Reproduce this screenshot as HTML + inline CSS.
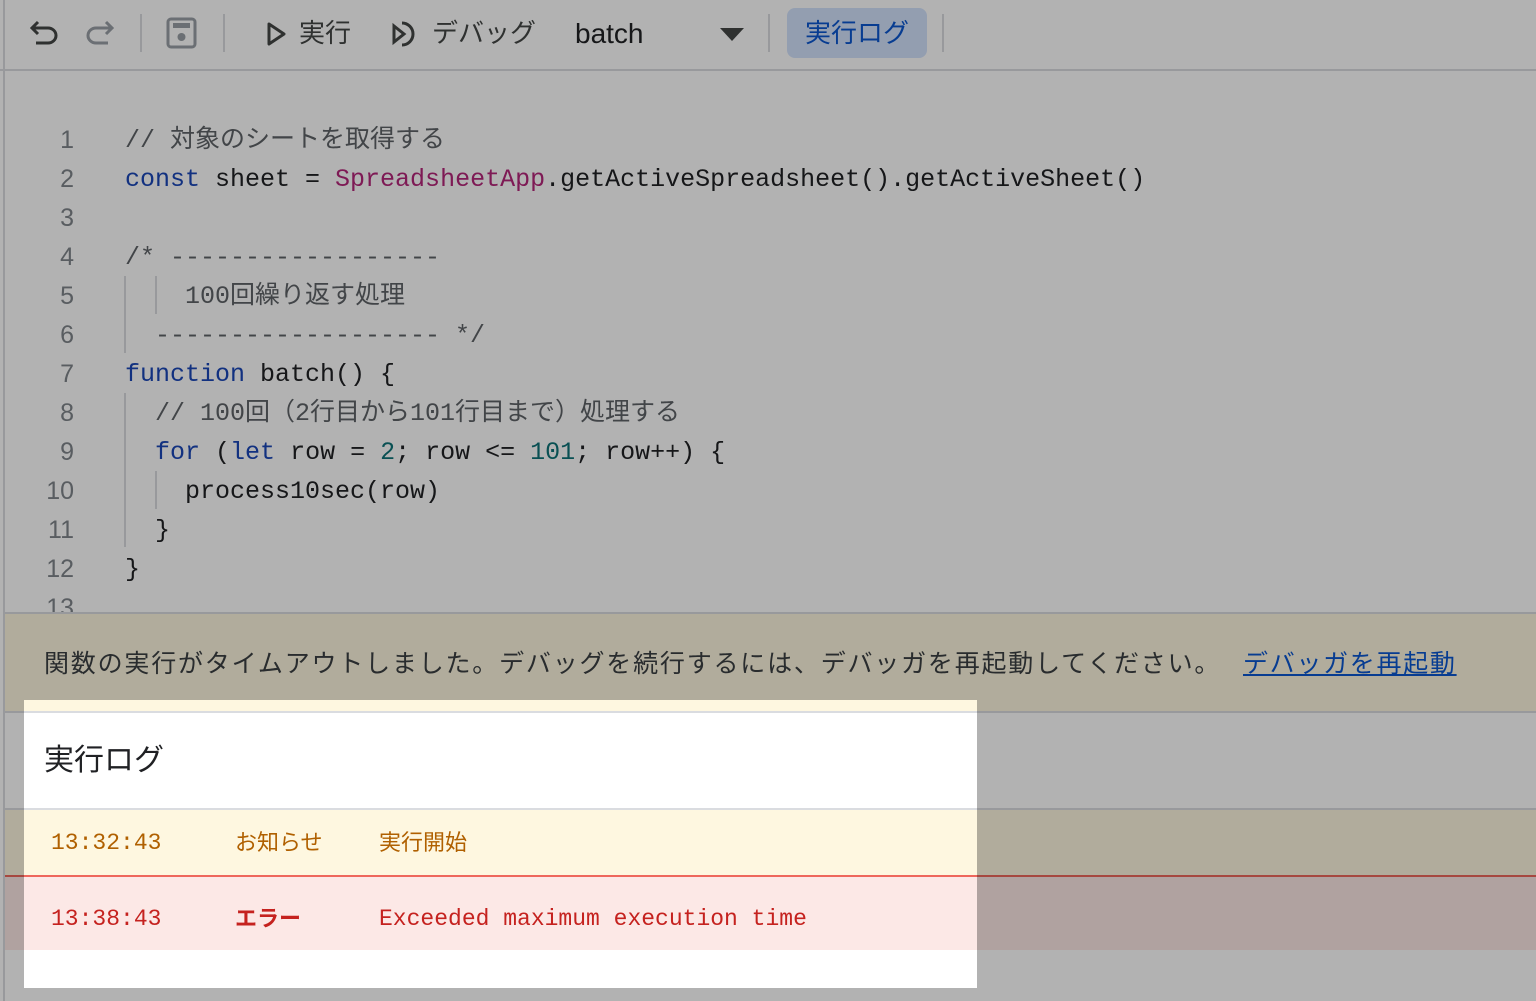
<!DOCTYPE html>
<html><head><meta charset="utf-8"><style>
*{margin:0;padding:0;box-sizing:border-box}
body{width:1536px;height:1001px;overflow:hidden;background:#fff;position:relative;font-family:"Liberation Sans","Noto Sans CJK JP",sans-serif;color:#202124}
.abs{position:absolute}
.tb{left:0;top:0;width:1536px;height:71px;border-bottom:2px solid #dadce0}
.sep{position:absolute;top:14px;width:2px;height:38px;background:#dadce0}
.tbt{position:absolute;top:16px;font-size:26px;color:#444746;line-height:34px}
.code{left:0;top:121px;font-family:"Liberation Mono","Noto Sans CJK JP",monospace;font-size:25px;line-height:39px;white-space:pre}
.ln{position:absolute;left:0;width:74px;text-align:right;font-family:"Liberation Sans",sans-serif;font-size:25px;color:#80868b}
.tx{position:absolute;left:125px;color:#202124}
.k{color:#1a47b8}.m{color:#b5267a}.n{color:#0d7377}.c{color:#5f6368}
.g{position:absolute;width:2px;background:#dadce0}
.mono{font-family:"Liberation Mono","Noto Sans CJK JP",monospace}
</style></head><body>
<div class="abs" style="left:3px;top:0;width:2px;height:1001px;background:#dadce0"></div>
<div class="abs tb"></div>
<svg class="abs" style="left:28px;top:18px" width="34" height="32" viewBox="0 0 34 32"><path d="M10 4 L4 10 L10 16 M4 10 H20 a8 7.5 0 0 1 0 15 H8" fill="none" stroke="#444746" stroke-width="3"/></svg>
<svg class="abs" style="left:82px;top:18px" width="34" height="32" viewBox="0 0 34 32"><path d="M24 4 L30 10 L24 16 M30 10 H14 a8 7.5 0 0 0 0 15 H26" fill="none" stroke="#9aa0a6" stroke-width="3"/></svg>
<div class="sep" style="left:140px"></div>
<svg class="abs" style="left:166px;top:17px" width="32" height="32" viewBox="0 0 32 32"><rect x="2" y="2" width="27" height="28" rx="3" fill="none" stroke="#9aa0a6" stroke-width="3"/><rect x="7" y="6" width="17" height="5" fill="#9aa0a6"/><circle cx="15.5" cy="20" r="4" fill="#9aa0a6"/></svg>
<div class="sep" style="left:223px"></div>
<svg class="abs" style="left:266px;top:21px" width="22" height="26" viewBox="0 0 22 26"><path d="M3 3 L18 13 L3 23 Z" fill="none" stroke="#444746" stroke-width="3" stroke-linejoin="round"/></svg>
<div class="tbt" style="left:299px">実行</div>
<svg class="abs" style="left:390px;top:18px" width="34" height="32" viewBox="0 0 34 32"><path d="M4 8 L14 16 L4 24 Z" fill="none" stroke="#444746" stroke-width="3"/><path d="M12 5 A11 11 0 1 1 12 27" fill="none" stroke="#444746" stroke-width="3"/></svg>
<div class="tbt" style="left:432px">デバッグ</div>
<div class="tbt" style="left:575px;top:17px;color:#202124;font-size:28px">batch</div>
<svg class="abs" style="left:720px;top:28px" width="24" height="14"><path d="M0 0 H24 L12 13 Z" fill="#444746"/></svg>
<div class="sep" style="left:768px"></div>
<div class="abs" style="left:787px;top:8px;width:140px;height:50px;background:#d3e3fd;border-radius:8px;color:#0b57d0;font-size:26px;line-height:50px;text-align:center">実行ログ</div>
<div class="sep" style="left:942px"></div>

<div class="abs code" style="width:1536px;height:490px">
<div class="ln" style="top:0">1</div><div class="tx c" style="top:0">// 対象のシートを取得する</div>
<div class="ln" style="top:39px">2</div><div class="tx" style="top:39px"><span class="k">const</span> sheet = <span class="m">SpreadsheetApp</span>.getActiveSpreadsheet().getActiveSheet()</div>
<div class="ln" style="top:78px">3</div>
<div class="ln" style="top:117px">4</div><div class="tx c" style="top:117px">/* ------------------</div>
<div class="ln" style="top:156px">5</div><div class="tx c" style="top:156px">    100回繰り返す処理</div>
<div class="ln" style="top:195px">6</div><div class="tx c" style="top:195px">  ------------------- */</div>
<div class="ln" style="top:234px">7</div><div class="tx" style="top:234px"><span class="k">function</span> batch() {</div>
<div class="ln" style="top:273px">8</div><div class="tx c" style="top:273px">  // 100回（2行目から101行目まで）処理する</div>
<div class="ln" style="top:312px">9</div><div class="tx" style="top:312px">  <span class="k">for</span> (<span class="k">let</span> row = <span class="n">2</span>; row &lt;= <span class="n">101</span>; row++) {</div>
<div class="ln" style="top:351px">10</div><div class="tx" style="top:351px">    process10sec(row)</div>
<div class="ln" style="top:390px">11</div><div class="tx" style="top:390px">  }</div>
<div class="ln" style="top:429px">12</div><div class="tx" style="top:429px">}</div>
<div class="ln" style="top:468px">13</div>
<div class="g" style="left:124px;top:155px;height:77px"></div>
<div class="g" style="left:155px;top:155px;height:38px"></div>
<div class="g" style="left:124px;top:272px;height:154px"></div>
<div class="g" style="left:155px;top:350px;height:38px"></div>
</div>

<div class="abs" style="left:5px;top:612px;width:1531px;height:389px;background:#fff"></div>
<div class="abs" style="left:5px;top:612px;width:1531px;height:101px;background:#fef7e0;border-top:2px solid #dadce0;border-bottom:2px solid #dadce0"></div>
<div class="abs" style="left:44px;top:647px;font-size:25px;line-height:34px;color:#3c4043;white-space:nowrap;letter-spacing:1.8px">関数の実行がタイムアウトしました。デバッグを続行するには、デバッガを再起動してください。</div>
<div class="abs" style="left:1243px;top:647px;font-size:25px;line-height:34px;color:#0b57d0;text-decoration:underline;white-space:nowrap;letter-spacing:1.7px">デバッガを再起動</div>
<div class="abs" style="left:44px;top:742px;font-size:30px;line-height:38px;color:#202124">実行ログ</div>
<div class="abs" style="left:5px;top:808px;width:1531px;height:67px;background:#fef7e0;border-top:2px solid #dadce0"></div>
<div class="abs" style="left:5px;top:875px;width:1531px;height:75px;background:#fce8e6;border-top:2px solid #ee675c"></div>
<div class="abs mono" style="left:51px;top:828px;font-size:23px;line-height:30px;color:#b06000">13:32:43</div>
<div class="abs" style="left:235px;top:828px;font-size:22px;line-height:30px;color:#b06000">お知らせ</div>
<div class="abs" style="left:379px;top:828px;font-size:22px;line-height:30px;color:#b06000">実行開始</div>
<div class="abs mono" style="left:51px;top:904px;font-size:23px;line-height:30px;color:#c5221f">13:38:43</div>
<div class="abs" style="left:235px;top:904px;font-size:22px;line-height:30px;color:#c5221f;font-weight:bold">エラー</div>
<div class="abs mono" style="left:379px;top:904px;font-size:23px;line-height:30px;color:#c5221f">Exceeded maximum execution time</div>

<div class="abs" style="left:24px;top:700px;width:953px;height:288px;box-shadow:0 0 0 3000px rgba(0,0,0,0.3)"></div>
</body></html>
